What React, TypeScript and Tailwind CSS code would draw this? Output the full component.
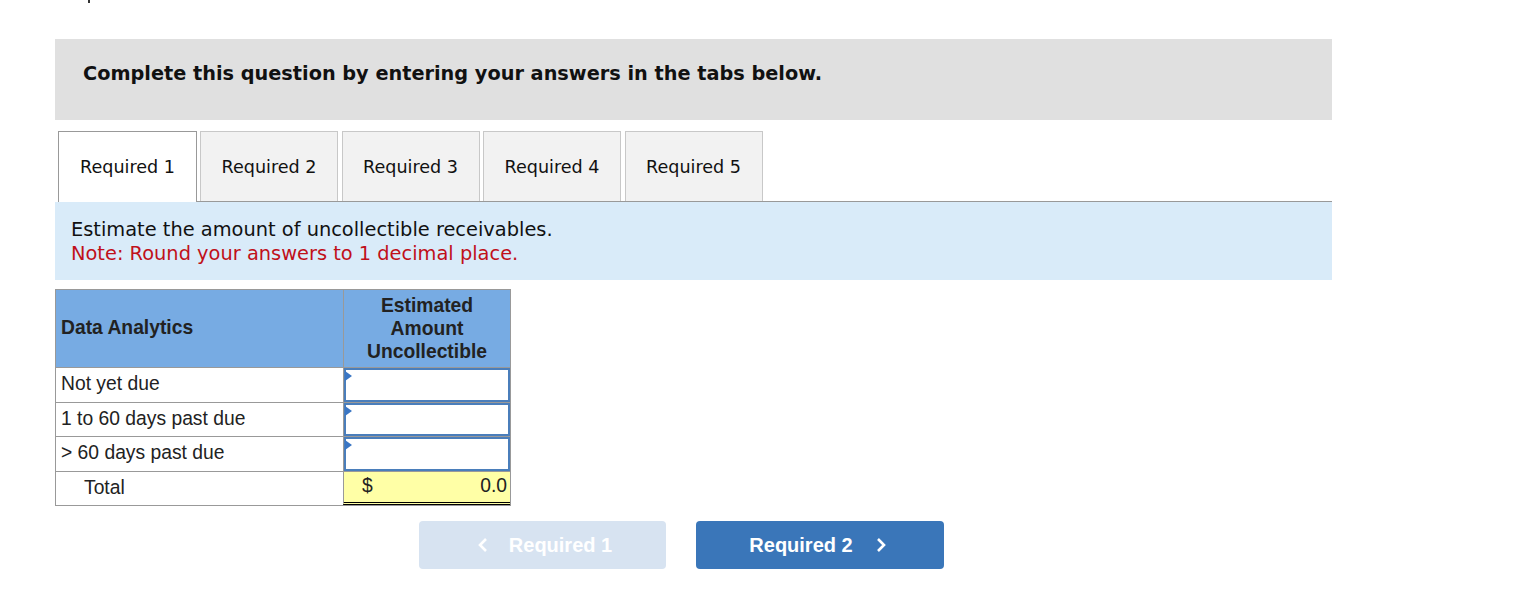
import React from 'react';

const tabs = ['Required 2', 'Required 3', 'Required 4', 'Required 5'];

const rows = ['Not yet due', '1 to 60 days past due', '> 60 days past due'];

const InputCell: React.FC = () => (
    <div className="relative h-full border-2 border-[#4a7ebb] bg-white">
        {/* little blue flag in the corner */}
        <span className="absolute left-[-1px] top-[1px] w-0 h-0 border-y-[5px] border-y-transparent border-l-[7px] border-l-[#3a76c4]" />
    </div>
);

export default function App() {
    return (
        <div className="relative w-[1515px] h-[598px] bg-white pl-[55px] pt-[39px] font-['DejaVu_Sans',Verdana,sans-serif] text-[#111]">
            <span className="absolute left-[88px] top-0 w-[2px] h-[3px] bg-[#333]" />

            <div className="w-[1277px] h-[81px] bg-[#e0e0e0] pl-[28px] pt-[23px]">
                <h2 className="text-[19.3px] leading-[24px] font-bold">
                    Complete this question by entering your answers in the tabs below.
                </h2>
            </div>

            <div className="w-[1277px] mt-[11px] flex">
                <div className="w-[3px]" />
                <div className="w-[139px] h-[71px] border border-b-0 border-[#999] bg-white flex items-center justify-center text-[17.6px] pt-[1px]">
                    Required 1
                </div>
                <div className="flex-1 flex gap-[3.5px] pl-[3px] border-b border-[#999]">
                    {tabs.map((t) => (
                        <div
                            key={t}
                            className="w-[138px] h-[70px] border border-b-0 border-[#c8c8c8] bg-[#f2f2f2] flex items-center justify-center text-[17.6px] pt-[1px]"
                        >
                            {t}
                        </div>
                    ))}
                </div>
            </div>

            <div className="w-[1277px] h-[78px] bg-[#d9ebf9] pl-[16px] pt-[16px] text-[19.4px] leading-[24px]">
                <p>Estimate the amount of uncollectible receivables.</p>
                <p className="text-[#c0101a]">Note: Round your answers to 1 decimal place.</p>
            </div>

            <div className="mt-[9px] w-[456px] font-['Liberation_Sans',Arial,sans-serif] text-[19.3px] text-[#222]">
                <div className="grid grid-cols-[287px_167px] border border-[#999] bg-[#77abe3] h-[79px]">
                    <div className="flex items-center pl-[5px] font-bold">Data Analytics</div>
                    <div className="flex items-center justify-center text-center font-bold leading-[23px] border-l border-[#999]">
                        Estimated<br />Amount<br />Uncollectible
                    </div>
                </div>
                {rows.map((r) => (
                    <div key={r} className="grid grid-cols-[287px_167px] h-[34.5px] border-x border-b border-[#999]">
                        <div className="flex items-center pl-[5px]">{r}</div>
                        <div className="border-l border-[#999]">
                            <InputCell />
                        </div>
                    </div>
                ))}
                <div className="grid grid-cols-[287px_167px] h-[34px] border-x border-b border-[#999]">
                    <div className="flex items-center pl-[28px]">Total</div>
                    <div className="border-l border-[#999] bg-[#ffffa6] flex items-center justify-between pl-[18px] pr-[3px] border-b-[3px] border-b-black border-double">
                        <span>$</span>
                        <span>0.0</span>
                    </div>
                </div>
            </div>

            <div className="mt-[15px] flex gap-[30px] pl-[364px] font-['Liberation_Sans',Arial,sans-serif] text-[20px] font-bold text-white">
                <button className="w-[247px] h-[48px] rounded-[4px] bg-[#d7e3f1] flex items-center justify-center gap-[20px] pl-[4px]">
                    <svg width="12" height="16" viewBox="0 0 12 16" fill="none" stroke="white" strokeWidth="2.6">
                        <path d="M9 2 L3 8 L9 14" />
                    </svg>
                    <span>Required 1</span>
                </button>
                <button className="w-[248px] h-[48px] rounded-[4px] bg-[#3a76b9] flex items-center justify-center gap-[22px] pr-[4px]">
                    <span>Required 2</span>
                    <svg width="12" height="16" viewBox="0 0 12 16" fill="none" stroke="white" strokeWidth="2.6">
                        <path d="M3 2 L9 8 L3 14" />
                    </svg>
                </button>
            </div>
        </div>
    );
}
